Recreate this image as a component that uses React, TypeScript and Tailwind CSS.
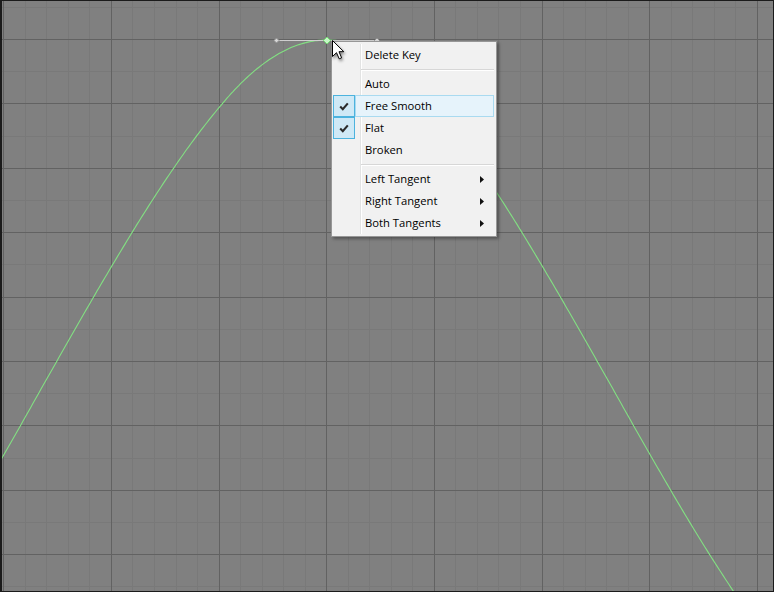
import React from 'react'

// slope of the curve against distance from the key at (327, 40): [dx, slope]
const slopeKnots: [number, number][] = [
  [0, 0], [50, 0.59], [100, 1.15], [150, 1.45], [200, 1.65], [250, 1.75],
  [300, 1.78], [350, 1.7], [400, 1.52], [470, 1.42],
]

const KEY_X = 327
const KEY_Y = 40

function slopeAt(dx: number) {
  for (let i = 0; i < slopeKnots.length - 1; i++) {
    const [x0, s0] = slopeKnots[i]
    const [x1, s1] = slopeKnots[i + 1]
    if (dx <= x1) return s0 + ((s1 - s0) * (dx - x0)) / (x1 - x0)
  }
  return slopeKnots[slopeKnots.length - 1][1]
}

function profile(): [number, number][] {
  const out: [number, number][] = [[0, 0]]
  let dy = 0
  const step = 2
  for (let dx = step; dx <= 460; dx += step) {
    dy += ((slopeAt(dx - step) + slopeAt(dx)) / 2) * step
    out.push([dx, dy])
  }
  return out
}

function curvePath() {
  const half = profile()
  const pts = [
    ...half.slice(1).reverse().map(([dx, dy]) => [KEY_X - dx, KEY_Y + dy]),
    ...half.map(([dx, dy]) => [KEY_X + dx, KEY_Y + dy]),
  ]
  return 'M' + pts.map(([x, y]) => `${x.toFixed(1)} ${y.toFixed(1)}`).join(' L')
}

function Grid() {
  const v: { x: number; major: boolean }[] = []
  for (let k = 0; 3.3 + k * 21.53 < 774; k++) v.push({ x: Math.round(3.3 + k * 21.53) + 0.5, major: k % 5 === 0 })
  const h: { y: number; major: boolean }[] = []
  for (let k = 0; 6.8 + k * 32.2 < 592; k++) h.push({ y: Math.round(6.8 + k * 32.2) + 0.5, major: k % 2 === 1 })
  return (
    <g shapeRendering="crispEdges">
      {v.filter((l) => !l.major).map((l) => (
        <line key={'vm' + l.x} x1={l.x} y1={0} x2={l.x} y2={592} stroke="#797979" strokeWidth={1} />
      ))}
      {h.filter((l) => !l.major).map((l) => (
        <line key={'hm' + l.y} x1={0} y1={l.y} x2={774} y2={l.y} stroke="#797979" strokeWidth={1} />
      ))}
      {v.filter((l) => l.major).map((l) => (
        <line key={'vM' + l.x} x1={l.x} y1={0} x2={l.x} y2={592} stroke="#626262" strokeWidth={1} />
      ))}
      {h.filter((l) => l.major).map((l) => (
        <line key={'hM' + l.y} x1={0} y1={l.y} x2={774} y2={l.y} stroke="#626262" strokeWidth={1} />
      ))}
    </g>
  )
}

function Diamond({ x, y, r, fill, stroke }: { x: number; y: number; r: number; fill: string; stroke: string }) {
  return (
    <path
      d={`M${x} ${y - r} L${x + r} ${y} L${x} ${y + r} L${x - r} ${y} Z`}
      fill={fill}
      stroke={stroke}
      strokeWidth={1}
    />
  )
}

function Check() {
  return (
    <svg width="10" height="9" viewBox="0 0 10 9">
      <path d="M1.2 4.6 L3.8 7.2 L8.8 1.4" fill="none" stroke="#2b2b2b" strokeWidth="2.1" />
    </svg>
  )
}

function Arrow() {
  return (
    <svg width="4" height="7" viewBox="0 0 4 7" className="ml-auto mr-[9px]">
      <path d="M0 0 L4 3.5 L0 7 Z" fill="#111" />
    </svg>
  )
}

type Item = { label: string; checked?: boolean; active?: boolean; sub?: boolean }

function MenuRow({ item }: { item: Item }) {
  return (
    <div className="flex h-[22px]">
      <div
        className={
          'flex w-[22px] shrink-0 items-center justify-center border ' +
          (item.checked ? 'border-[#4cb3de] bg-[#cfe9f6]' : 'border-transparent')
        }
      >
        {item.checked && <Check />}
      </div>
      <div
        className={
          'flex flex-1 items-center border pl-[9px] ' +
          (item.active ? 'border-[#a9daf0] bg-[#e6f3fb]' : 'border-transparent')
        }
      >
        <span className="text-[11.25px] leading-none text-black">{item.label}</span>
        {item.sub && <Arrow />}
      </div>
    </div>
  )
}

function Separator() {
  return (
    <div className="flex h-[7px] flex-col justify-center pl-[28px]">
      <div className="h-px bg-[#d7d7d7]" />
      <div className="h-px bg-white" />
    </div>
  )
}

function ContextMenu() {
  return (
    <div className="absolute left-[329px] top-[40px] h-[196px] w-[166px] border border-[#979797] bg-[#f1f1f1] py-[2px] pl-[1px] pr-[2px] shadow-[2px_2px_3px_rgba(0,0,0,0.35)] [font-family:'Segoe_UI','Open_Sans',sans-serif]">
      <div className="absolute bottom-[2px] left-[28px] top-[2px] w-px bg-[#e2e3e3]" />
      <div className="absolute bottom-[2px] left-[29px] top-[2px] w-px bg-white" />
      <div className="relative flex flex-col">
        <MenuRow item={{ label: 'Delete Key' }} />
        <Separator />
        <MenuRow item={{ label: 'Auto' }} />
        <MenuRow item={{ label: 'Free Smooth', checked: true, active: true }} />
        <MenuRow item={{ label: 'Flat', checked: true }} />
        <MenuRow item={{ label: 'Broken' }} />
        <Separator />
        <MenuRow item={{ label: 'Left Tangent', sub: true }} />
        <MenuRow item={{ label: 'Right Tangent', sub: true }} />
        <MenuRow item={{ label: 'Both Tangents', sub: true }} />
      </div>
    </div>
  )
}

function Cursor() {
  return (
    <svg
      width="16"
      height="22"
      viewBox="0 0 16 22"
      className="absolute left-[330px] top-[39px] drop-shadow-[1px_2px_1.5px_rgba(0,0,0,0.45)]"
    >
      <path
        d="M0.5 0.5 L0.5 16.5 L4.5 12.7 L7.2 18.8 L9.6 17.8 L7 11.7 L11.8 11.7 Z"
        fill="#fff"
        stroke="#000"
        strokeWidth="1"
        strokeLinejoin="miter"
      />
    </svg>
  )
}

export default function App() {
  return (
    <div className="flex h-[592px] w-[774px] border-b border-l-2 border-r border-t border-[#1b1b1b] bg-[#808080]">
      <div className="relative flex-1 overflow-hidden">
        <svg width="771" height="590" viewBox="2 1 771 590" className="block">
          <Grid />
          <path d={curvePath()} fill="none" stroke="#82e082" strokeWidth={1.1} strokeLinejoin="round" />
          <line x1={276} y1={40.5} x2={377} y2={40.5} stroke="#cfcfcf" strokeWidth={1} />
          <Diamond x={276.5} y={40.5} r={2.5} fill="#d8d8d8" stroke="#8f8f8f" />
          <Diamond x={377} y={40.5} r={2.5} fill="#d8d8d8" stroke="#8f8f8f" />
          <Diamond x={KEY_X} y={40.5} r={3.5} fill="#c6f7c6" stroke="#72dc72" />
        </svg>
        <ContextMenu />
        <Cursor />
      </div>
    </div>
  )
}
